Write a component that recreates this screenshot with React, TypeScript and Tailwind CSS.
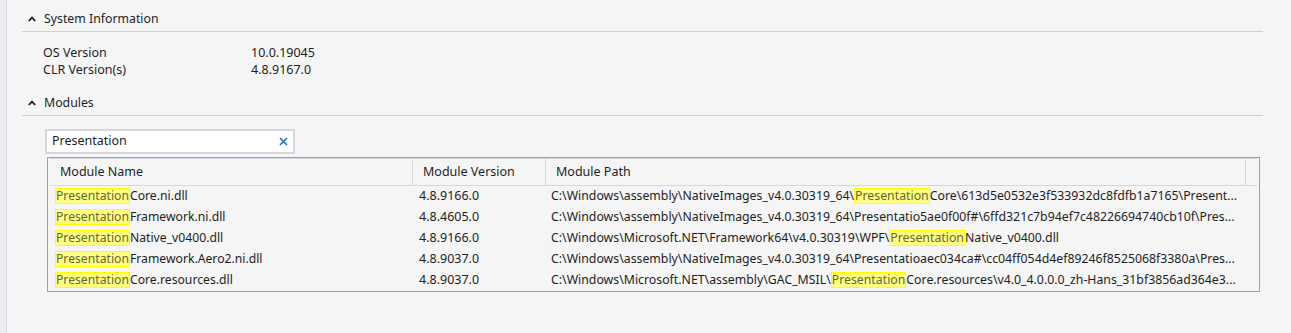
import { type ReactNode } from "react";

type Part = { text: string; hit?: boolean };

type ModuleRow = {
    name: Part[];
    version: string;
    path: Part[];
};

const rows: ModuleRow[] = [
    {
        name: [{ text: "Presentation", hit: true }, { text: "Core.ni.dll" }],
        version: "4.8.9166.0",
        path: [
            { text: "C:\\Windows\\assembly\\NativeImages_v4.0.30319_64\\" },
            { text: "Presentation", hit: true },
            { text: "Core\\613d5e0532e3f533932dc8fdfb1a7165\\Present..." },
        ],
    },
    {
        name: [{ text: "Presentation", hit: true }, { text: "Framework.ni.dll" }],
        version: "4.8.4605.0",
        path: [{ text: "C:\\Windows\\assembly\\NativeImages_v4.0.30319_64\\Presentatio5ae0f00f#\\6ffd321c7b94ef7c48226694740cb10f\\Pres..." }],
    },
    {
        name: [{ text: "Presentation", hit: true }, { text: "Native_v0400.dll" }],
        version: "4.8.9166.0",
        path: [
            { text: "C:\\Windows\\Microsoft.NET\\Framework64\\v4.0.30319\\WPF\\" },
            { text: "Presentation", hit: true },
            { text: "Native_v0400.dll" },
        ],
    },
    {
        name: [{ text: "Presentation", hit: true }, { text: "Framework.Aero2.ni.dll" }],
        version: "4.8.9037.0",
        path: [{ text: "C:\\Windows\\assembly\\NativeImages_v4.0.30319_64\\Presentatioaec034ca#\\cc04ff054d4ef89246f8525068f3380a\\Pres..." }],
    },
    {
        name: [{ text: "Presentation", hit: true }, { text: "Core.resources.dll" }],
        version: "4.8.9037.0",
        path: [
            { text: "C:\\Windows\\Microsoft.NET\\assembly\\GAC_MSIL\\" },
            { text: "Presentation", hit: true },
            { text: "Core.resources\\v4.0_4.0.0.0_zh-Hans_31bf3856ad364e3..." },
        ],
    },
];

function Highlighted({ parts }: { parts: Part[] }) {
    return (
        <>
            {parts.map((p, i) =>
                p.hit ? (
                    <span key={i} className="inline-block h-[16px] leading-[14px] border border-[#ffff00] bg-[#ffff80] text-[#66663a]">
                        {p.text}
                    </span>
                ) : (
                    <span key={i}>{p.text}</span>
                )
            )}
        </>
    );
}

function SectionHeader({ title }: { title: string }) {
    return (
        <div className="flex items-center pt-[10px] pb-[4px] border-b border-[#cfcfdb]">
            <svg width="8" height="6" viewBox="0 0 8 6" className="ml-[6px] mr-[8px]">
                <path d="M0.8 5 L4 1.6 L7.2 5" fill="none" stroke="#1e1e1e" strokeWidth="1.8" />
            </svg>
            <span className="text-[12.3px] leading-[17px] text-[#1e1e1e]">{title}</span>
        </div>
    );
}

function Cell({ w, pl, children }: { w: string; pl: string; children: ReactNode }) {
    return <div className={`${w} ${pl} shrink-0 overflow-hidden whitespace-nowrap`}>{children}</div>;
}

export default function App() {
    return (
        <div
            className="flex h-[333px] w-[1291px] bg-[#f5f5f5] text-[12.5px] text-[#1e1e1e]"
            style={{ fontFamily: '"Segoe UI", "Noto Sans", "Liberation Sans", sans-serif' }}
        >
            <div className="w-[7px] shrink-0 bg-[#eeeef2] border-r border-[#dcdce6]" />
            <div className="flex-1 pl-[15px] pr-[28px]">
                <SectionHeader title="System Information" />
                <div className="mt-[12px] pl-[21px] leading-[17px]">
                    <div className="flex">
                        <span className="w-[208px]">OS Version</span>
                        <span>10.0.19045</span>
                    </div>
                    <div className="flex">
                        <span className="w-[208px]">CLR Version(s)</span>
                        <span>4.8.9167.0</span>
                    </div>
                </div>

                <div className="mt-[6px]">
                    <SectionHeader title="Modules" />
                </div>

                <div className="mt-[13px] ml-[23px] flex h-[25px] w-[250px] items-center justify-between border-2 border-[#d6d6e0] bg-white pl-[5px] pr-[5px]">
                    <span className="text-[12.5px]">Presentation</span>
                    <svg width="9" height="9" viewBox="0 0 9 9">
                        <path d="M1 1 L8 8 M8 1 L1 8" stroke="#1f6fc5" strokeWidth="1.6" />
                    </svg>
                </div>

                <div className="mt-[3px] ml-[25px] w-[1213px] h-[135px] border border-[#a0a0a0] px-[2px]">
                    <div className="flex h-[28px] items-center border-t border-b border-[#d6d6e2]">
                        <div className="flex h-full w-[363px] shrink-0 items-center border-r border-[#d6d6e2] pl-[10px]">Module Name</div>
                        <div className="flex h-full w-[133px] shrink-0 items-center border-r border-[#d6d6e2] pl-[10px]">Module Version</div>
                        <div className="flex h-full w-[700px] shrink-0 items-center border-r border-[#d6d6e2] pl-[10px]">Module Path</div>
                        <div className="flex-1" />
                    </div>
                    {rows.map((r, i) => (
                        <div key={i} className="flex h-[21px] items-center">
                            <Cell w="w-[363px]" pl="pl-[5px] text-[12.2px]">
                                <Highlighted parts={r.name} />
                            </Cell>
                            <Cell w="w-[133px]" pl="pl-[6px]">{r.version}</Cell>
                            <Cell w="w-[700px]" pl="pl-[5px] text-[12.3px]">
                                <Highlighted parts={r.path} />
                            </Cell>
                        </div>
                    ))}
                </div>
            </div>
        </div>
    );
}
